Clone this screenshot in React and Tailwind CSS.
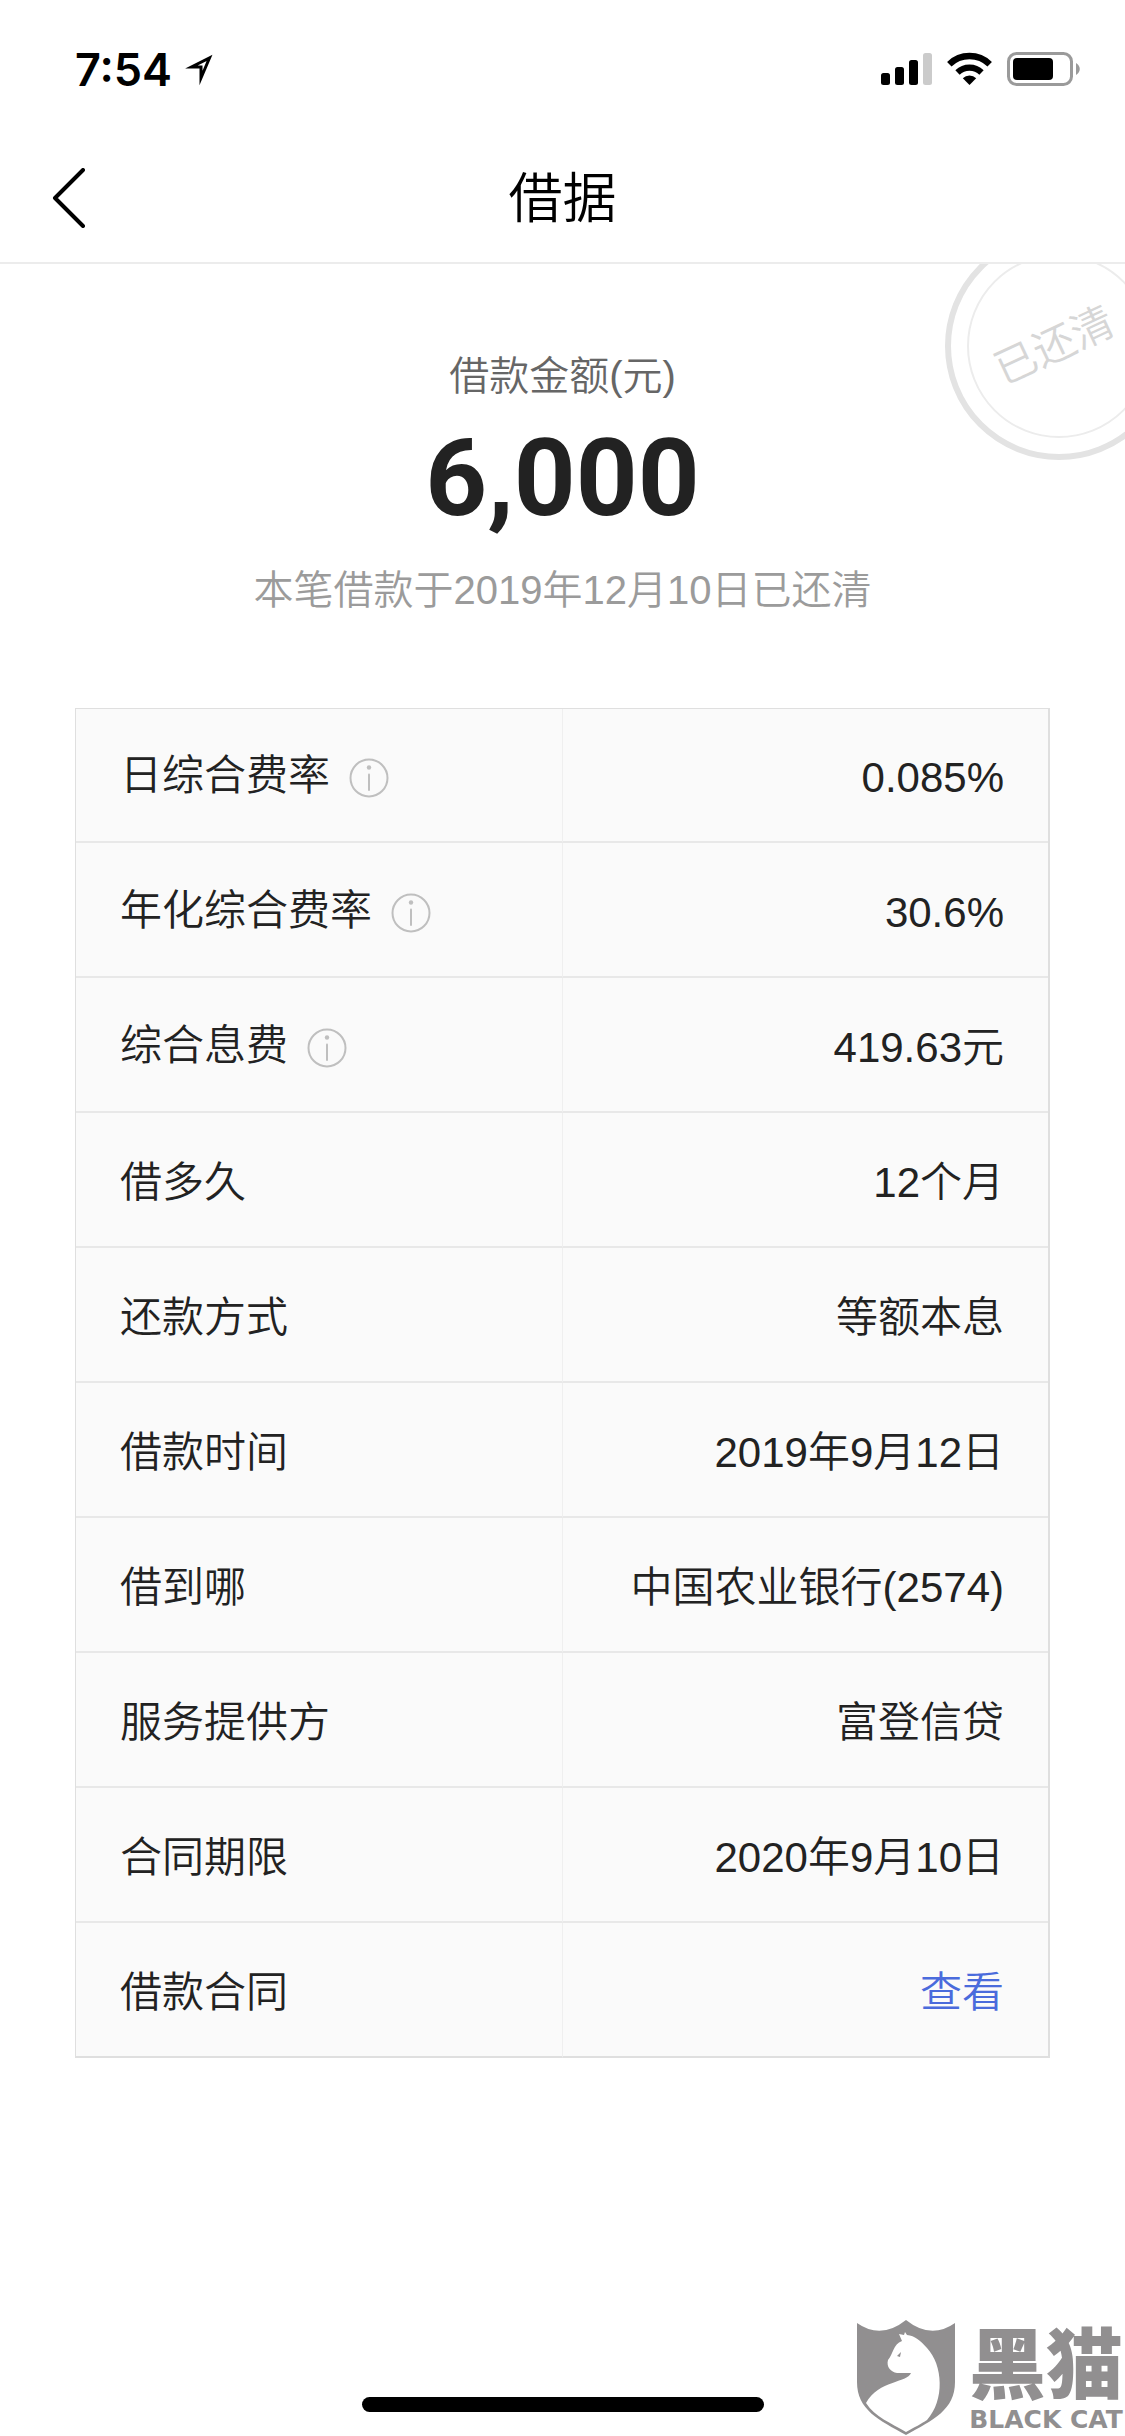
import { clsx } from "clsx";

const rows = [
  { label: "日综合费率", value: "0.085%", info: true },
  { label: "年化综合费率", value: "30.6%", info: true },
  { label: "综合息费", value: "419.63元", info: true },
  { label: "借多久", value: "12个月" },
  { label: "还款方式", value: "等额本息" },
  { label: "借款时间", value: "2019年9月12日" },
  { label: "借到哪", value: "中国农业银行(2574)" },
  { label: "服务提供方", value: "富登信贷" },
  { label: "合同期限", value: "2020年9月10日" },
  { label: "借款合同", value: "查看", link: true },
];

function StatusBar() {
  return (
    <div className="flex h-[132px] items-start justify-between pl-[75px] pr-11 text-black">
      <div className="flex items-center gap-2.5 pt-10">
        <span className="font-['Inter',sans-serif] text-[45px] leading-[60px] font-semibold">
          7:54
        </span>
        <svg width="32" height="34" viewBox="0 0 32 34" fill="none">
          <path
            d="M27.5 5L19 25V14H9.5L27.5 5Z"
            stroke="currentColor"
            strokeWidth="3"
            strokeMiterlimit="8"
          />
        </svg>
      </div>
      <div className="flex items-center gap-[15px] pt-[52px]">
        <svg width="51" height="34" viewBox="0 0 51 34" fill="currentColor">
          <rect x="0" y="21" width="9" height="12" rx="2.5" />
          <rect x="14" y="15" width="9" height="18" rx="2.5" />
          <rect x="28" y="8" width="9" height="25" rx="2.5" />
          <rect x="42" y="1" width="9" height="32" rx="2.5" fill="#cbcbcb" />
        </svg>
        <svg width="45" height="34" viewBox="0 0 45 34" fill="none">
          <path d="M2.3 12.2A29 29 0 0 1 42.7 12.2" stroke="currentColor" strokeWidth="6.4" />
          <path d="M10.5 20.4A17.3 17.3 0 0 1 34.5 20.4" stroke="currentColor" strokeWidth="6.2" />
          <path d="M22.5 33L15.8 26.3A9.6 9.6 0 0 1 29.2 26.3Z" fill="currentColor" />
        </svg>
        <svg width="74" height="34" viewBox="0 0 74 34" fill="none">
          <rect x="1.5" y="1.5" width="63" height="31" rx="8" stroke="#9a9a9a" strokeWidth="3" />
          <rect x="6" y="6" width="40" height="22" rx="4" fill="currentColor" />
          <path d="M69 11C74 14 74 20 69 23Z" fill="#9a9a9a" />
        </svg>
      </div>
    </div>
  );
}

function TitleBar() {
  return (
    <header className="grid h-[132px] grid-cols-[1fr_auto_1fr] items-center border-b-2 border-[#ececec] pt-0.5 text-black">
      <button type="button" aria-label="返回" className="ml-[51px] w-9">
        <svg width="36" height="60" viewBox="0 0 36 60" fill="none">
          <path
            d="M32 2L4 30L32 58"
            stroke="currentColor"
            strokeWidth="4"
            strokeLinecap="round"
            strokeLinejoin="round"
          />
        </svg>
      </button>
      <h1 className="pt-0.5 text-[54px] leading-[72px]">借据</h1>
    </header>
  );
}

function Stamp() {
  return (
    <div className="absolute -top-8 -right-12 flex size-[228px] items-center justify-center rounded-full border-[6px] border-[#e3e3e3]">
      <div className="flex size-[184px] items-center justify-center rounded-full border-2 border-[#ececec]">
        <span className="-rotate-25 pr-2 pb-1 text-[42px] leading-none whitespace-nowrap text-[#d6d6d6]">
          已还清
        </span>
      </div>
    </div>
  );
}

function InfoIcon() {
  return (
    <svg width="40" height="40" viewBox="0 0 40 40" fill="none">
      <circle cx="20" cy="20" r="18.5" stroke="#bfbfbf" strokeWidth="2" />
      <circle cx="20" cy="9.5" r="2.2" fill="#bfbfbf" />
      <path d="M20 16.5V32" stroke="#bfbfbf" strokeWidth="2" strokeLinecap="round" />
    </svg>
  );
}

function DetailTable() {
  return (
    <table className="w-full table-fixed border-separate border-spacing-0 border-t border-r-2 border-l border-[#dfdfdf] bg-[#fafafa] text-[42px] leading-[60px] text-[#222]">
      <tbody>
        {rows.map((row, i) => {
          const line = i === rows.length - 1 ? "border-b-[#dfdfdf]" : "border-b-[#e8e8e8]";
          return (
            <tr key={row.label} className={i === 0 ? "h-[134px]" : "h-[135px]"}>
              <th
                scope="row"
                className={clsx("border-b-2 pt-1.5 pl-11 text-left font-[350]", line)}
              >
                <div className="flex items-center gap-[19px]">
                  <span className={clsx(row.info && "pb-1")}>{row.label}</span>
                  {row.info && (
                    <button type="button" aria-label={`${row.label}说明`}>
                      <InfoIcon />
                    </button>
                  )}
                </div>
              </th>
              <td
                className={clsx(
                  "border-b-2 border-l border-l-[#efefef] pt-1.5 pr-11 text-right",
                  line
                )}
              >
                {row.link ? (
                  <a href="#contract" className="text-[#4a6bdc]">
                    {row.value}
                  </a>
                ) : (
                  row.value
                )}
              </td>
            </tr>
          );
        })}
      </tbody>
    </table>
  );
}

function Watermark() {
  return (
    <div className="absolute right-0.5 bottom-0 flex items-end gap-3.5 text-[#918f90]">
      <svg width="98" height="116" viewBox="0 0 98 116">
        <path
          d="M0 3Q24 20 49 0Q74 20 98 3V62C98 90 76 100 49 115C22 100 0 90 0 62Z"
          fill="currentColor"
        />
        <path
          d="M42 14L45 21C36 24 36 35 31 40C29 47 34 52 40 53H54C50 63 22 60 9 83C18 97 34 103 49 112C58 107 64 104 70 100C88 80 86 45 70 28C63 20 58 16 50 15L48 12L47 15Z"
          fill="white"
        />
        <path d="M40 36L44 32L43 37Z" fill="currentColor" />
      </svg>
      <div className="flex flex-col items-center">
        <span className="text-[77px] leading-[76px] font-black">黑猫</span>
        <span className="font-['DejaVu_Sans',sans-serif] text-[25px] leading-8 font-bold">
          BLACK CAT
        </span>
      </div>
    </div>
  );
}

export default function App() {
  return (
    <div className="relative flex min-h-screen w-full flex-col overflow-hidden bg-white font-['Liberation_Sans','Noto_Sans_CJK_SC',sans-serif] font-[350]">
      <StatusBar />
      <TitleBar />
      <main className="relative flex-1 overflow-hidden px-[75px]">
        <Stamp />
        <section className="flex flex-col items-center pt-[82px] pb-[88px]">
          <p className="text-[40px] leading-[60px] text-[#666]">借款金额(元)</p>
          <p className="font-['Roboto',sans-serif] text-[108px] leading-[144px] font-bold text-[#222]">
            6,000
          </p>
          <p className="pt-2.5 text-[40px] leading-[60px] text-[#9b9b9b]">
            本笔借款于2019年12月10日已还清
          </p>
        </section>
        <DetailTable />
      </main>
      <footer className="flex justify-center pb-6">
        <div className="h-[15px] w-[402px] rounded-full bg-black" />
      </footer>
      <Watermark />
    </div>
  );
}
